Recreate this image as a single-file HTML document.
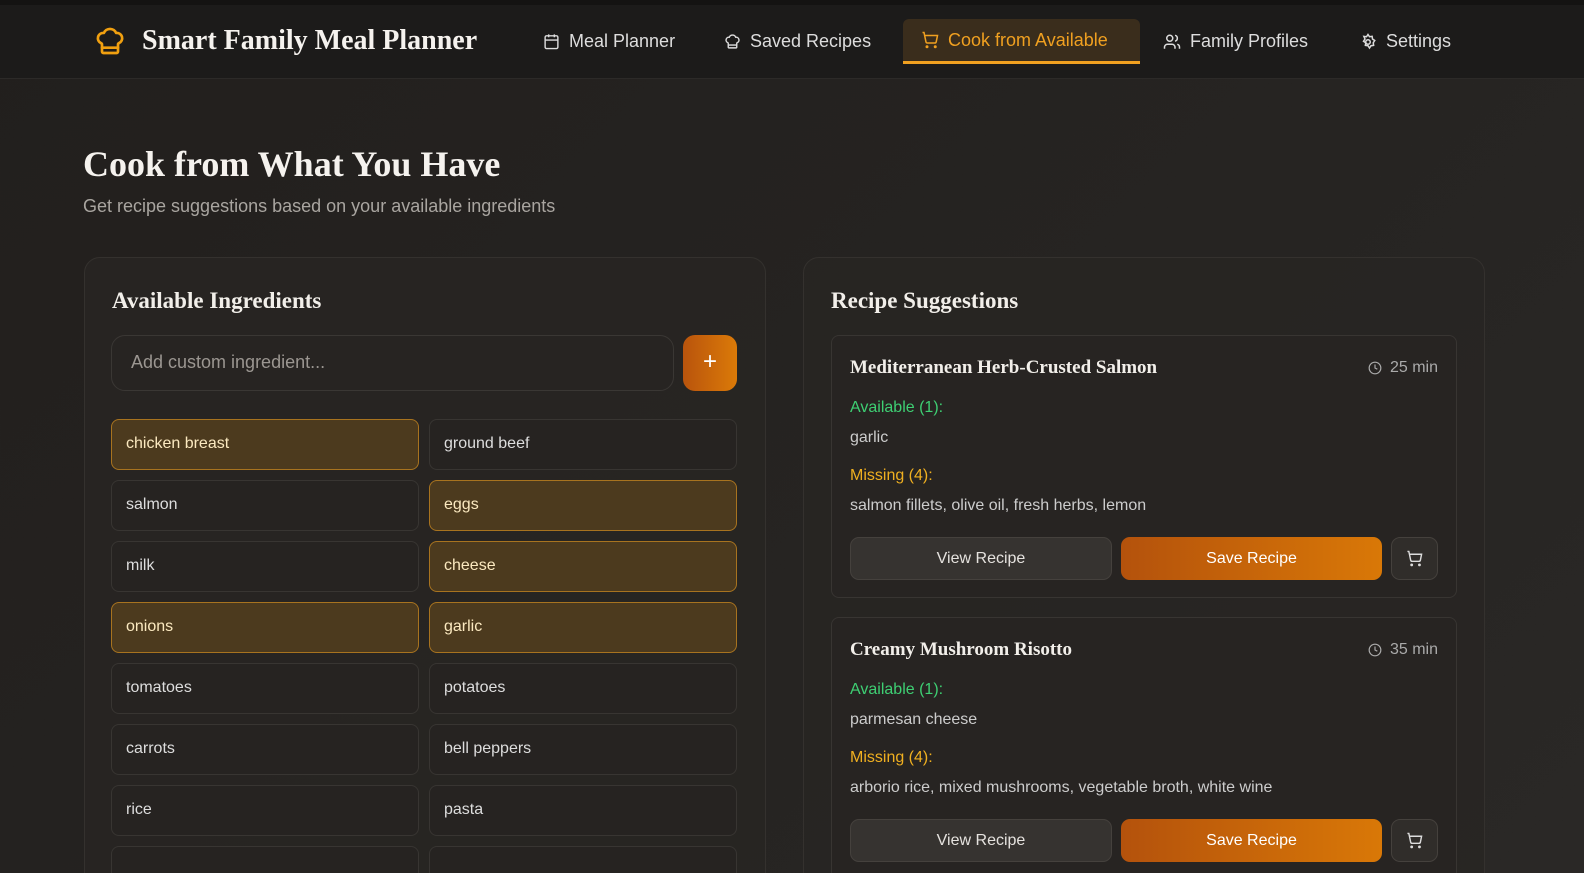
<!DOCTYPE html>
<html style="overflow:hidden;width:1584px;height:873px"><head><meta charset="utf-8"><style>
*{box-sizing:border-box;margin:0;padding:0}
body{width:1584px;height:873px;overflow:hidden;background:linear-gradient(135deg,#221f1d,#262422 60%,#2a2826);font-family:"Liberation Sans",sans-serif;color:#eee;position:relative}
.top{position:absolute;left:0;top:0;width:1584px;height:5px;background:#141312}
.hdr{position:absolute;left:0;top:5px;width:1584px;height:74px;background:#1c1b1a;border-bottom:1px solid #2c2a28}
.logo{position:absolute;left:94px;top:19px}
.brand{position:absolute;left:142px;top:20px;font-family:"Liberation Serif",serif;font-weight:bold;font-size:28px;color:#f5f2ee;letter-spacing:0px}
.nav{position:absolute;top:19px;height:45px;display:flex;align-items:center;font-size:18px;color:#ddd;gap:9px}
.nav svg{stroke:#ddd}
.nav.act{background:#3a2d1c;color:#f0a020;border-bottom:3px solid #f0a020;border-radius:6px 6px 0 0;padding:0 18px}
.nav.act svg{stroke:#f0a020}
h1{position:absolute;left:83px;top:143px;font-family:"Liberation Serif",serif;font-size:36px;font-weight:bold;color:#f5f2ee}
.sub{position:absolute;left:83px;top:196px;font-size:18px;color:#a9a5a0}
.card{position:absolute;top:257px;width:682px;height:640px;border:1px solid #34312e;border-radius:16px;background:rgba(40,37,35,.8)}
.card h2{position:absolute;left:27px;top:30px;font-family:"Liberation Serif",serif;font-size:23px;font-weight:bold;color:#f2efea}
.inp{position:absolute;left:111px;top:335px;width:563px;height:56px;border:1px solid #3a3734;border-radius:14px;background:#272422;padding:16px 19px;font-size:18px;color:#9b9691}
.plus{position:absolute;left:683px;top:335px;width:54px;height:56px;border-radius:12px;background:linear-gradient(90deg,#b9540d,#db7a08);font-size:24px;text-align:center;line-height:54px;color:#fff}
.ing{position:absolute;width:308px;height:51px;border:1px solid #383532;border-radius:8px;background:#262321;font-size:16px;color:#ddd;padding:15px 14px}
.ing.on{background:#4c3a1e;border-color:#a8731f;color:#fbe9c0}
.rc{position:absolute;left:831px;width:626px;height:263px;border:1px solid #383532;border-radius:8px;background:#272422}
.rc .t{position:absolute;left:18px;top:21px;font-family:"Liberation Serif",serif;font-weight:bold;font-size:19px;color:#f2efea}
.rc .tm{position:absolute;right:18px;top:23px;font-size:16px;color:#aaa;display:flex;align-items:center;gap:8px}
.rc .a{position:absolute;left:18px;top:63px;font-size:16px;color:#3ecf73}
.rc .m{position:absolute;left:18px;top:131px;font-size:16px;color:#f0b020}
.rc .l1{position:absolute;left:18px;top:93px;font-size:16px;color:#ccc}
.rc .l2{position:absolute;left:18px;top:161px;font-size:16px;color:#ccc}
.b{position:absolute;top:201px;height:43px;border-radius:9px;font-size:16px;text-align:center;line-height:41px}
.vb{left:18px;width:262px;background:#363330;border:1px solid #45413d;color:#e5e2de}
.sb{left:289px;width:261px;background:linear-gradient(90deg,#b4520c,#d97807);color:#fff;line-height:43px}
.cb{left:559px;width:47px;background:#302d2a;border:1px solid #45413d;display:flex;align-items:center;justify-content:center}
</style></head><body>
<div class="top"></div>
<div class="hdr">
<svg class="logo" width="32" height="34" viewBox="0 0 24 24" fill="none" stroke="#f0a010" stroke-width="2" stroke-linecap="round" stroke-linejoin="round"><path d="M17 21a1 1 0 0 0 1-1v-5.35c0-.46.31-.85.73-1.04a4 4 0 0 0-2.13-7.63 5 5 0 0 0-9.2 0A4 4 0 0 0 5.27 13.6c.42.19.73.58.73 1.04V20a1 1 0 0 0 1 1Z"/><path d="M6 17h12"/></svg>
<div class="brand">Smart Family Meal Planner</div>
</div>
<div class="nav" style="left:543px"><svg width="17" height="17" viewBox="0 0 24 24" fill="none" stroke-width="2"><rect x="3" y="4" width="18" height="18" rx="2"/><path d="M16 2v4M8 2v4M3 10h18"/></svg>Meal Planner</div>
<div class="nav" style="left:724px"><svg width="17" height="17" viewBox="0 0 24 24" fill="none" stroke-width="2"><path d="M17 21a1 1 0 0 0 1-1v-5.35c0-.46.31-.85.73-1.04a4 4 0 0 0-2.13-7.63 5 5 0 0 0-9.2 0A4 4 0 0 0 5.27 13.6c.42.19.73.58.73 1.04V20a1 1 0 0 0 1 1Z"/><path d="M6 17h12"/></svg>Saved Recipes</div>
<div class="nav act" style="left:903px;width:237px"><svg width="18" height="18" viewBox="0 0 24 24" fill="none" stroke-width="2"><circle cx="8" cy="21" r="1"/><circle cx="19" cy="21" r="1"/><path d="M2 2h2l2.6 12.4a2 2 0 0 0 2 1.6h9.7a2 2 0 0 0 2-1.6L22 6H5"/></svg>Cook from Available</div>
<div class="nav" style="left:1163px"><svg width="18" height="18" viewBox="0 0 24 24" fill="none" stroke-width="2"><circle cx="9" cy="7" r="4"/><path d="M16 21v-2a4 4 0 0 0-4-4H6a4 4 0 0 0-4 4v2M16 3.1a4 4 0 0 1 0 7.8M22 21v-2a4 4 0 0 0-3-3.9"/></svg>Family Profiles</div>
<div class="nav" style="left:1359px"><svg width="18" height="18" viewBox="0 0 24 24" fill="none" stroke-width="2"><circle cx="12" cy="12" r="3"/><path d="M12 2l2 3 3.5-.5.5 3.5 3 2-2 3 .5 3.5-3.5.5-2 3-2-3-3.5-.5.5-3.5-3-2 2-3L6.5 4.5 10 5z"/></svg>Settings</div>

<h1>Cook from What You Have</h1>
<div class="sub">Get recipe suggestions based on your available ingredients</div>

<div class="card" style="left:84px"><h2>Available Ingredients</h2></div>
<div class="card" style="left:803px"><h2>Recipe Suggestions</h2></div>

<div class="inp">Add custom ingredient...</div>
<div class="plus">+</div>

<div class="ing on" style="left:111px;top:419px">chicken breast</div>
<div class="ing" style="left:429px;top:419px">ground beef</div>
<div class="ing" style="left:111px;top:480px">salmon</div>
<div class="ing on" style="left:429px;top:480px">eggs</div>
<div class="ing" style="left:111px;top:541px">milk</div>
<div class="ing on" style="left:429px;top:541px">cheese</div>
<div class="ing on" style="left:111px;top:602px">onions</div>
<div class="ing on" style="left:429px;top:602px">garlic</div>
<div class="ing" style="left:111px;top:663px">tomatoes</div>
<div class="ing" style="left:429px;top:663px">potatoes</div>
<div class="ing" style="left:111px;top:724px">carrots</div>
<div class="ing" style="left:429px;top:724px">bell peppers</div>
<div class="ing" style="left:111px;top:785px">rice</div>
<div class="ing" style="left:429px;top:785px">pasta</div>
<div class="ing" style="left:111px;top:846px"></div>
<div class="ing" style="left:429px;top:846px"></div>

<div class="rc" style="top:335px">
<div class="t">Mediterranean Herb-Crusted Salmon</div>
<div class="tm"><svg width="14" height="14" viewBox="0 0 24 24" fill="none" stroke="#aaa" stroke-width="2"><circle cx="12" cy="12" r="10"/><path d="M12 6v6l4 2"/></svg>25 min</div>
<div class="a">Available (1):</div><div class="l1">garlic</div>
<div class="m">Missing (4):</div><div class="l2">salmon fillets, olive oil, fresh herbs, lemon</div>
<div class="b vb">View Recipe</div><div class="b sb">Save Recipe</div>
<div class="b cb"><svg width="17" height="17" viewBox="0 0 24 24" fill="none" stroke="#ddd" stroke-width="2"><circle cx="8" cy="21" r="1"/><circle cx="19" cy="21" r="1"/><path d="M2 2h2l2.6 12.4a2 2 0 0 0 2 1.6h9.7a2 2 0 0 0 2-1.6L22 6H5"/></svg></div>
</div>
<div class="rc" style="top:617px">
<div class="t">Creamy Mushroom Risotto</div>
<div class="tm"><svg width="14" height="14" viewBox="0 0 24 24" fill="none" stroke="#aaa" stroke-width="2"><circle cx="12" cy="12" r="10"/><path d="M12 6v6l4 2"/></svg>35 min</div>
<div class="a">Available (1):</div><div class="l1">parmesan cheese</div>
<div class="m">Missing (4):</div><div class="l2">arborio rice, mixed mushrooms, vegetable broth, white wine</div>
<div class="b vb">View Recipe</div><div class="b sb">Save Recipe</div>
<div class="b cb"><svg width="17" height="17" viewBox="0 0 24 24" fill="none" stroke="#ddd" stroke-width="2"><circle cx="8" cy="21" r="1"/><circle cx="19" cy="21" r="1"/><path d="M2 2h2l2.6 12.4a2 2 0 0 0 2 1.6h9.7a2 2 0 0 0 2-1.6L22 6H5"/></svg></div>
</div>
</body></html>
